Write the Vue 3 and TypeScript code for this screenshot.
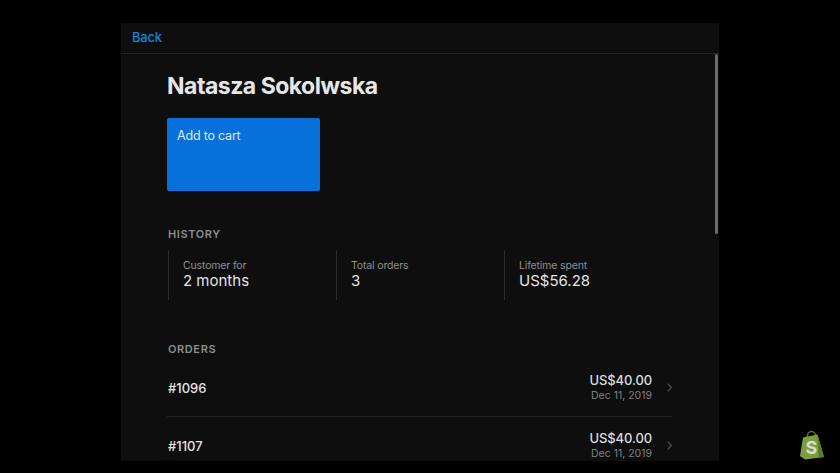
<template>
  <div class="stage">
    <div class="panel">
      <header class="topbar">
        <a class="back">Back</a>
      </header>
      <main class="content">
        <h1 class="name">{{ customer.name }}</h1>
        <button class="cart">Add to cart</button>

        <section class="history">
          <h2 class="heading">HISTORY</h2>
          <div class="stats">
            <div v-for="stat in stats" :key="stat.label" class="stat">
              <span class="stat-label">{{ stat.label }}</span>
              <span class="stat-value">{{ stat.value }}</span>
            </div>
          </div>
        </section>

        <section class="orders">
          <h2 class="heading">ORDERS</h2>
          <div v-for="order in orders" :key="order.id" class="order">
            <span class="order-id">{{ order.id }}</span>
            <div class="order-right">
              <div class="order-meta">
                <span class="order-total">{{ order.total }}</span>
                <span class="order-date">{{ order.date }}</span>
              </div>
              <svg class="chevron" width="5" height="9" viewBox="0 0 5 9">
                <path d="M.7.7l3.600 3.800-3.600 3.800" fill="none" stroke="#555" stroke-width="1.100" />
              </svg>
            </div>
          </div>
        </section>
      </main>
      <div class="scrollbar"></div>
    </div>

    <svg class="logo" width="26" height="30" viewBox="0 0 26 30">
      <path d="M8 8c0-4 2-6.500 4.500-6.500S17 4 17 8" fill="none" stroke="#4f7a2c" stroke-width="1.500" />
      <path d="M4 7.500 18.500 4.500 25 27 6 29.500 1 26z" fill="#7a9f3c" />
      <path d="M18.500 4.500 25 27 19.500 28z" fill="#54802b" />
      <text x="6.500" y="24" class="logo-s">S</text>
    </svg>
  </div>
</template>

<script setup lang="ts">
const customer = { name: 'Natasza Sokolwska' };

const stats = [
  { label: 'Customer for', value: '2 months' },
  { label: 'Total orders', value: '3' },
  { label: 'Lifetime spent', value: 'US$56.28' },
];

const orders = [
  { id: '#1096', total: 'US$40.00', date: 'Dec 11, 2019' },
  { id: '#1107', total: 'US$40.00', date: 'Dec 11, 2019' },
];
</script>

<style>
html,
body {
  margin: 0;
  background: #000;
}
</style>

<style scoped>
.stage {
  position: relative;
  width: 840px;
  height: 473px;
  padding-top: 23px;
  box-sizing: border-box;
  display: flex;
  justify-content: center;
  overflow: hidden;
  background: #000;
  font-family: Inter, "Liberation Sans", sans-serif;
}
.panel {
  position: relative;
  width: 598px;
  height: 438px;
  background: #0e0e0f;
  overflow: hidden;
}
.topbar {
  height: 30px;
  border-bottom: 1px solid #232323;
  display: flex;
  align-items: center;
  padding-left: 11px;
}
.back {
  margin-top: -2px;
  font-size: 13px;
  font-weight: 500;
  letter-spacing: -0.2px;
  color: #0f86d8;
}
.content {
  padding: 18px 47px 0 46px;
}
.name {
  margin: 0;
  font-size: 23px;
  line-height: 28px;
  font-weight: 700;
  letter-spacing: -0.5px;
  color: #e6e6e6;
}
.cart {
  display: flex;
  align-items: flex-start;
  width: 153px;
  height: 73px;
  margin-top: 18px;
  padding: 10px 10px;
  border: none;
  border-radius: 2px;
  background: #0870db;
  color: #dfeafa;
  font: 400 12.500px/16px Inter, "Liberation Sans", sans-serif;
  letter-spacing: -0.2px;
}
.heading {
  margin: 0 0 0 1px;
  font-size: 11px;
  line-height: 14px;
  font-weight: 600;
  letter-spacing: 0.6px;
  color: #8c8c8c;
}
.history {
  margin-top: 36px;
}
.stats {
  display: flex;
  margin: 9px 0 0 1px;
}
.stat {
  width: 168px;
  height: 50px;
  box-sizing: border-box;
  border-left: 1px solid #2b2b2b;
  padding: 9px 0 0 14px;
  display: flex;
  flex-direction: column;
}
.stat-label {
  font-size: 10.500px;
  line-height: 14px;
  letter-spacing: -0.15px;
  color: #8f8f8f;
}
.stat-value {
  margin-top: -1px;
  font-size: 15px;
  line-height: 18px;
  color: #e4e4e4;
}
.orders {
  margin-top: 42px;
}
.order {
  height: 58px;
  box-sizing: border-box;
  border-bottom: 1px solid #232323;
  display: flex;
  align-items: center;
  justify-content: space-between;
}
.order:first-of-type {
  margin-top: 3px;
}
.order-id {
  margin-left: 1px;
  padding-top: 1px;
  font-size: 13px;
  font-weight: 500;
  color: #e4e4e4;
}
.order-right {
  display: flex;
  align-items: center;
  gap: 15px;
}
.order-meta {
  display: flex;
  flex-direction: column;
  align-items: flex-end;
  padding-top: 1px;
}
.order-total {
  font-size: 13px;
  line-height: 16px;
  font-weight: 500;
  letter-spacing: -0.1px;
  color: #dcdcdc;
}
.order-date {
  font-size: 10.500px;
  line-height: 16px;
  color: #808080;
}
.scrollbar {
  position: absolute;
  top: 31px;
  right: 1px;
  width: 3px;
  height: 180px;
  border-radius: 2px;
  background: #6b6b6b;
}
.logo {
  position: absolute;
  left: 799px;
  top: 430px;
}
.logo-s {
  font: 700 18px Inter, "Liberation Sans", sans-serif;
  fill: #dcdcd0;
}
</style>
